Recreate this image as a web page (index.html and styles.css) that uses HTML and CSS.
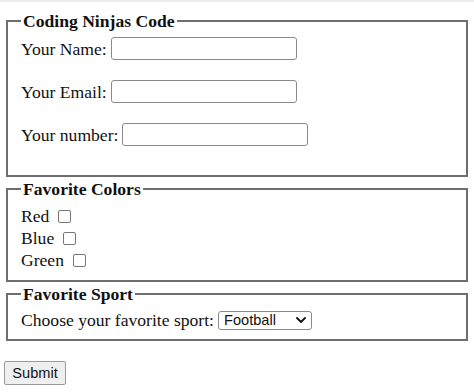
FILE: index.html
```html
<!DOCTYPE html>
<html>
<head>
<meta charset="utf-8">
<link rel="stylesheet" href="styles.css">
</head>
<body>
<div class="topband"></div>
<form class="page-form">
  <fieldset class="group group-code">
    <legend class="group-title">Coding Ninjas Code</legend>
    <div class="field-row"><label class="field-label">Your Name:</label><input class="text-input" type="text"></div>
    <div class="field-row"><label class="field-label">Your Email:</label><input class="text-input" type="text"></div>
    <div class="field-row"><label class="field-label">Your number:</label><input class="text-input" type="text"></div>
  </fieldset>
  <fieldset class="group group-colors">
    <legend class="group-title">Favorite Colors</legend>
    <div class="check-row"><label class="field-label">Red</label><input class="check" type="checkbox"></div>
    <div class="check-row"><label class="field-label">Blue</label><input class="check" type="checkbox"></div>
    <div class="check-row"><label class="field-label">Green</label><input class="check" type="checkbox"></div>
  </fieldset>
  <fieldset class="group group-sport">
    <legend class="group-title">Favorite Sport</legend>
    <div class="select-row">
      <label class="field-label">Choose your favorite sport:</label>
      <div class="select-box">
        <span class="select-value">Football</span>
        <svg class="chevron" width="10" height="6" viewBox="0 0 10 6"><path d="M1 1 L5 5 L9 1" fill="none" stroke="#111" stroke-width="1.8" stroke-linecap="round" stroke-linejoin="round"/></svg>
      </div>
    </div>
  </fieldset>
  <button class="submit-btn" type="button">Submit</button>
</form>
</body>
</html>
```

FILE: styles.css
```css
html, body {
  margin: 0;
  padding: 0;
  background: #ffffff;
}

body {
  font-family: "Liberation Serif", "Times New Roman", serif;
  font-size: 17.6px;
  color: #111;
}

.topband {
  height: 2px;
  background: #ececec;
}

.page-form {
  padding: 0 4px 0 4px;
  display: flex;
  flex-direction: column;
  align-items: stretch;
}

.group {
  margin: 0 2px;
  border: 2px solid #6e6e6e;
  padding: 6px 13px 9px 13px;
  min-width: 0;
}

.group-code {
  margin-top: 9px;
}

.group-colors {
  margin-top: 2px;
}

.group-sport {
  margin-top: 2px;
  padding-bottom: 9px;
}

.group-title {
  font-weight: bold;
  padding: 0 2px;
  line-height: 20px;
}

.field-row {
  display: flex;
  align-items: center;
  gap: 4px;
  height: 23px;
  margin-bottom: 20px;
}

.field-label {
  white-space: nowrap;
  line-height: 20px;
}

.text-input {
  box-sizing: border-box;
  width: 186px;
  height: 23px;
  margin: 0;
  border: 1px solid #8a8a8a;
  border-radius: 3px;
  background: #fff;
  padding: 0 3px;
}

.check-row {
  display: flex;
  align-items: center;
  gap: 9px;
  height: 22px;
}

.check {
  appearance: none;
  -webkit-appearance: none;
  box-sizing: border-box;
  width: 13px;
  height: 13px;
  margin: 0;
  border: 1px solid #777;
  border-radius: 2px;
  background: #fff;
}

.select-row {
  display: flex;
  align-items: center;
  gap: 4px;
  height: 20px;
}

.select-box {
  box-sizing: border-box;
  width: 94px;
  height: 19px;
  border: 1px solid #8a8a8a;
  border-radius: 3px;
  display: flex;
  align-items: center;
  justify-content: space-between;
  padding: 0 5px 0 5px;
  font-family: "Liberation Sans", Arial, sans-serif;
  font-size: 14.6px;
  color: #111;
}

.chevron {
  display: block;
}

.submit-btn {
  align-self: flex-start;
  margin-top: 20px;
  box-sizing: border-box;
  width: 62px;
  height: 24px;
  padding: 0;
  border: 1px solid #9a9a9a;
  border-radius: 2px;
  background: #efefef;
  font-family: "Liberation Sans", Arial, sans-serif;
  font-size: 14.6px;
  color: #111;
}
```
